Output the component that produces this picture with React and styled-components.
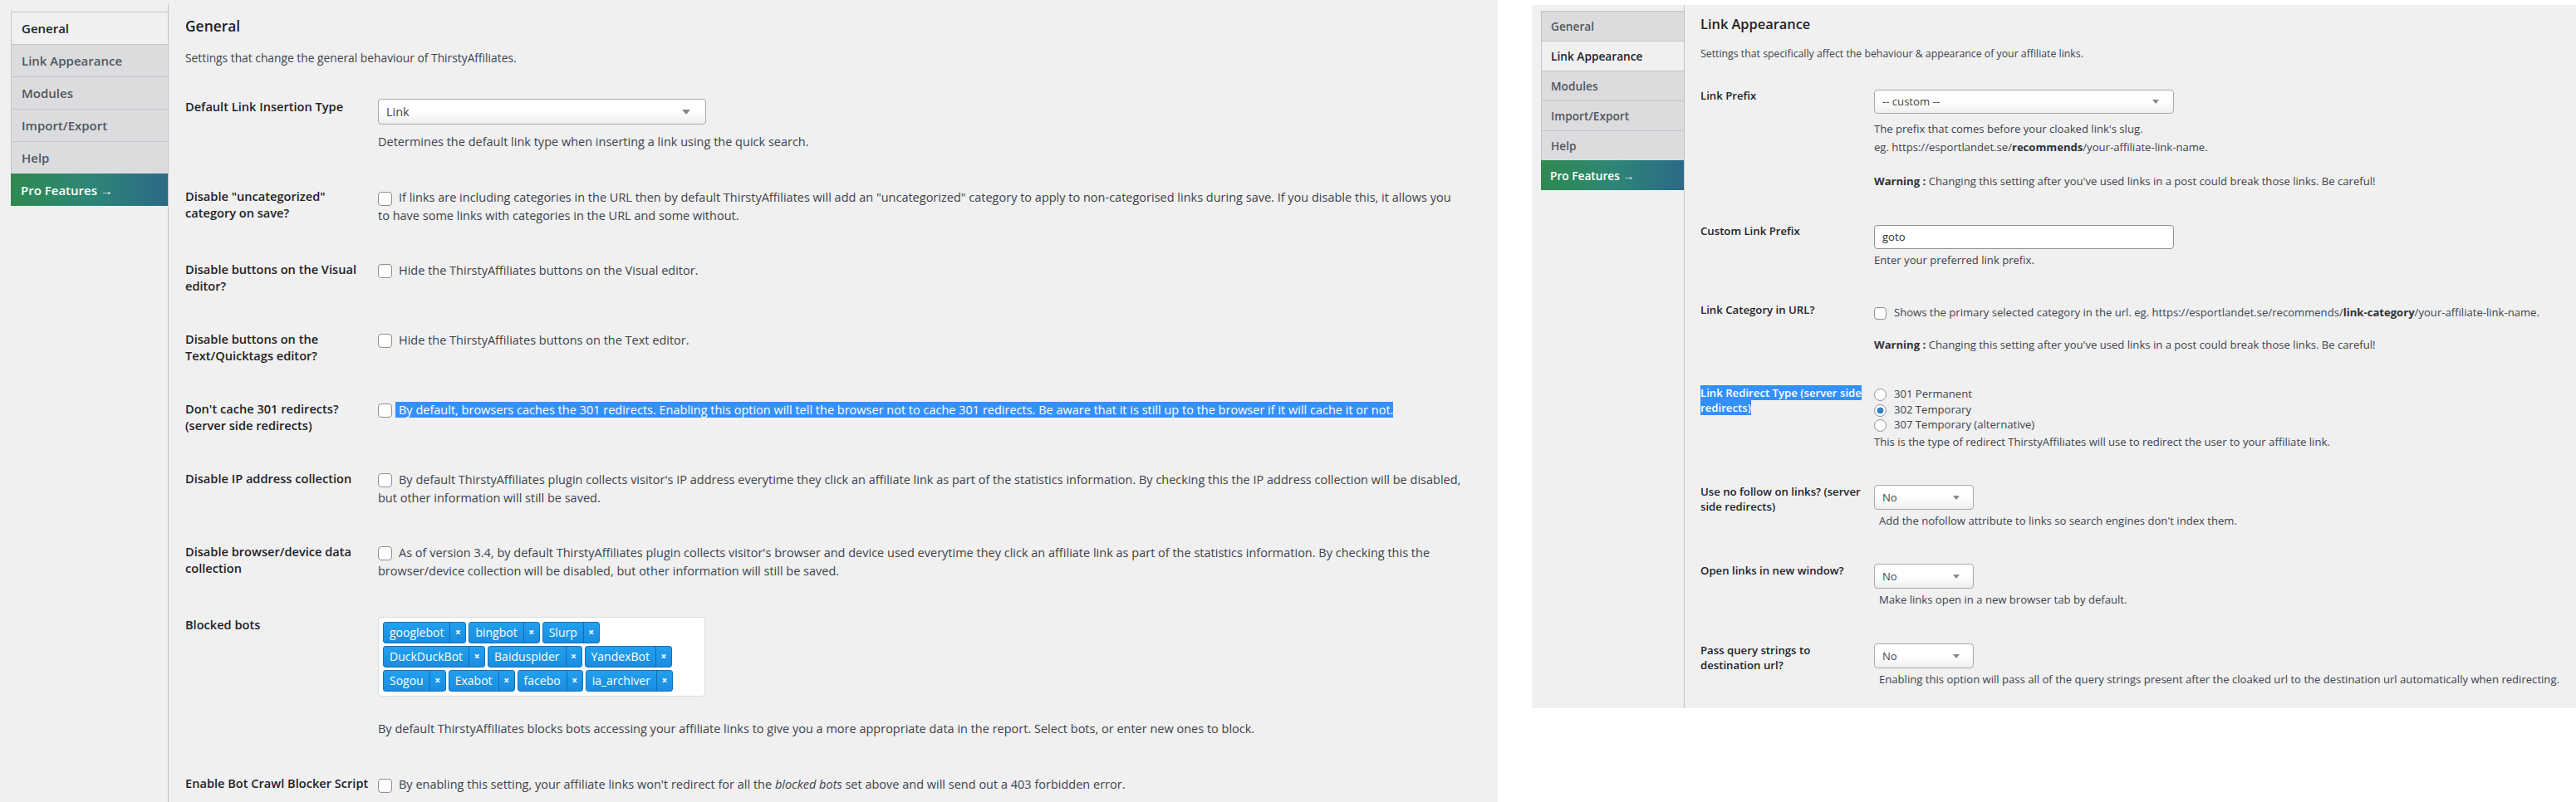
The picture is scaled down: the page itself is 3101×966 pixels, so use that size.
import React from 'react'
import styled, { createGlobalStyle, ThemeProvider } from 'styled-components'

// two screenshots of the same settings page, taken at different zoom levels
const large = {
  panelW: 1803, panelH: 966, panelTop: 0, panelLeft: 0,
  sideMt: 4, sidePt: 10, sideMl: 13, sideW: 189,
  tabH: 39, tabFs: 15, tabPl: 12,
  contentPt: 19, contentPl: 20,
  h2Fs: 17.4, h2Lh: 24, introMt: 16, introFs: 13.8, introLh: 22,
  labelW: 232, labelFs: 14.6, labelLh: 20,
  fieldFs: 14.5, fieldLh: 22, fieldPt: 1,
  check: 17, checkGap: 8,
}

const small = {
  panelW: 1257, panelH: 847, panelTop: 6, panelLeft: 41,
  sideMt: 0, sidePt: 7, sideMl: 11, sideW: 172,
  tabH: 36, tabFs: 13.7, tabPl: 11,
  contentPt: 12, contentPl: 19,
  h2Fs: 16.4, h2Lh: 22, introMt: 14, introFs: 12.3, introLh: 21,
  labelW: 209, labelFs: 13.2, labelLh: 18,
  fieldFs: 13.1, fieldLh: 21, fieldPt: 1.5,
  check: 15, checkGap: 9,
}

const GlobalStyle = createGlobalStyle`
  html, body {
    margin: 0;
    padding: 0;
    background: #fff;
  }
  body {
    font-family: "Open Sans", "Noto Sans", "Liberation Sans", sans-serif;
  }
  * { box-sizing: border-box; }
`

const Screen = styled.div`
  display: flex;
  align-items: flex-start;
  width: 3101px;
  height: 966px;
  overflow: hidden;
`

const Panel = styled.div`
  display: flex;
  flex: none;
  width: ${({ theme }) => theme.panelW}px;
  height: ${({ theme }) => theme.panelH}px;
  margin-top: ${({ theme }) => theme.panelTop}px;
  margin-left: ${({ theme }) => theme.panelLeft}px;
  background: #f0f0f1;
  overflow: hidden;
`

const Sidebar = styled.nav`
  flex: none;
  width: ${({ theme }) => theme.sideW + theme.sideMl + 1}px;
  margin-top: ${({ theme }) => theme.sideMt}px;
  padding: ${({ theme }) => theme.sidePt}px 0 0 ${({ theme }) => theme.sideMl}px;
  border-right: 1px solid #c3c4c7;
`

const Tab = styled.div`
  display: flex;
  align-items: center;
  height: ${({ theme }) => theme.tabH}px;
  padding-left: ${({ theme }) => theme.tabPl}px;
  border-top: 1px solid #c3c4c7;
  border-left: 1px solid #c3c4c7;
  background: ${({ $active }) => ($active ? '#f0f0f1' : '#dcdcde')};
  color: ${({ $active }) => ($active ? '#1d2327' : '#50575e')};
  font-size: ${({ theme }) => theme.tabFs}px;
  font-weight: 600;
  white-space: nowrap;
`

const ProTab = styled(Tab)`
  border: none;
  background: linear-gradient(to right, #2f8a4f 0%, #2d8676 50%, #2c6a87 100%);
  color: #fff;
`

const Content = styled.main`
  flex: 1;
  min-width: 0;
  padding: ${({ theme }) => theme.contentPt}px 0 0 ${({ theme }) => theme.contentPl}px;
`

const Title = styled.h2`
  margin: 0;
  font-size: ${({ theme }) => theme.h2Fs}px;
  line-height: ${({ theme }) => theme.h2Lh}px;
  font-weight: 600;
  color: #1d2327;
`

const Intro = styled.p`
  margin: ${({ theme }) => theme.introMt}px 0 0;
  font-size: ${({ theme }) => theme.introFs}px;
  line-height: ${({ theme }) => theme.introLh}px;
  color: #3c434a;
  white-space: nowrap;
`

const Row = styled.div`
  display: grid;
  grid-template-columns: ${({ theme }) => theme.labelW}px 1fr;
  align-items: start;
  padding-top: ${({ $pad }) => $pad}px;
`

const Label = styled.div`
  font-size: ${({ theme }) => theme.labelFs}px;
  line-height: ${({ theme }) => theme.labelLh}px;
  font-weight: 600;
  color: #1d2327;
  white-space: nowrap;
`

const Field = styled.div`
  padding-top: ${({ theme }) => theme.fieldPt}px;
  font-size: ${({ theme }) => theme.fieldFs}px;
  line-height: ${({ theme }) => theme.fieldLh}px;
  color: #3c434a;
  white-space: nowrap;
`

const Hint = styled.div`
  margin-top: ${({ $mt }) => $mt || 0}px;
  padding-left: ${({ $indent }) => $indent || 0}px;
  line-height: ${({ $lh, theme }) => $lh || theme.fieldLh}px;
`

const Strong = styled.b`
  font-weight: 700;
  color: #2c3338;
`

const Selected = styled.span`
  background: #3390ff;
  color: #fff;
  padding-left: ${({ $lead }) => $lead || 0}px;
`

const Check = styled.span`
  display: inline-block;
  width: ${({ theme }) => theme.check}px;
  height: ${({ theme }) => theme.check}px;
  margin-right: ${({ $gap, theme }) => $gap ?? theme.checkGap}px;
  border: 1px solid #8c8f94;
  border-radius: 4px;
  background: #fff;
  vertical-align: middle;
`

const Radio = styled.span`
  display: inline-block;
  width: 15px;
  height: 15px;
  margin-right: 9px;
  border: 1px solid #8c8f94;
  border-radius: 50%;
  background: ${({ $on }) =>
    $on ? 'radial-gradient(circle, #3582c4 0 3.6px, #fff 4.2px)' : '#fff'};
  vertical-align: middle;
`

const RadioLine = styled.div`
  line-height: 18.5px;
`

const SelectBox = styled.div`
  display: flex;
  align-items: center;
  justify-content: space-between;
  width: ${({ $w }) => $w}px;
  height: ${({ $h }) => $h}px;
  padding: 0 ${({ $pr }) => $pr}px 0 9px;
  border: 1px solid #aaa;
  border-radius: 4px;
  background: linear-gradient(to bottom, #ffffff 50%, #eeeeee 100%);
  color: #444;
  font-size: ${({ $fs }) => $fs}px;
`

const Caret = styled.span`
  width: 0;
  height: 0;
  border-left: ${({ $s }) => $s}px solid transparent;
  border-right: ${({ $s }) => $s}px solid transparent;
  border-top: ${({ $s }) => $s + 1}px solid #888;
`

const TextInput = styled.div`
  display: flex;
  align-items: center;
  width: 361px;
  height: 29px;
  padding-left: 9px;
  border: 1px solid #8c8f94;
  border-radius: 4px;
  background: #fff;
  color: #2c3338;
`

const TagBox = styled.div`
  display: flex;
  flex-direction: column;
  gap: 3px;
  width: 394px;
  padding: 5px;
  border: 1px solid #dcdcde;
  border-radius: 4px;
  background: #fff;
`

const TagRow = styled.div`
  display: flex;
  gap: 3px;
`

const Tag = styled.div`
  display: flex;
  height: 26px;
  border: 1px solid #0f72c1;
  border-radius: 3px;
  background: linear-gradient(to bottom, #22a0ef, #1a8ce0);
  color: #fff;
  font-size: 14px;
  line-height: 24px;
`

const TagText = styled.span`
  padding: 0 7px;
  border-right: 1px solid #0f6cb5;
`

const TagX = styled.span`
  display: flex;
  align-items: center;
  justify-content: center;
  width: 18px;
  font-size: 12px;
  font-weight: 700;
`

const Select = ({ w, h, fs, pr, caret, children }) => (
  <SelectBox $w={w} $h={h} $fs={fs} $pr={pr}>
    <span>{children}</span>
    <Caret $s={caret} />
  </SelectBox>
)

const Tabs = ({ active }) => (
  <Sidebar>
    {['General', 'Link Appearance', 'Modules', 'Import/Export', 'Help'].map((name) => (
      <Tab key={name} $active={name === active}>{name}</Tab>
    ))}
    <ProTab>Pro Features →</ProTab>
  </Sidebar>
)

const bots = [
  ['googlebot', 'bingbot', 'Slurp'],
  ['DuckDuckBot', 'Baiduspider', 'YandexBot'],
  ['Sogou', 'Exabot', 'facebo', 'ia_archiver'],
]

const GeneralPanel = () => (
  <ThemeProvider theme={large}>
    <Panel>
      <Tabs active="General" />
      <Content>
        <Title>General</Title>
        <Intro>Settings that change the general behaviour of ThirstyAffiliates.</Intro>

        <Row $pad={37}>
          <Label>Default Link Insertion Type</Label>
          <Field>
            <Select w={395} h={31} fs={14.5} pr={18} caret={5}>Link</Select>
            <Hint $mt={9.5}>Determines the default link type when inserting a link using the quick search.</Hint>
          </Field>
        </Row>

        <Row $pad={44.5}>
          <Label>Disable "uncategorized"<br />category on save?</Label>
          <Field>
            <Check />If links are including categories in the URL then by default ThirstyAffiliates will add an "uncategorized" category to apply to non-categorised links during save. If you disable this, it allows you
            <br />to have some links with categories in the URL and some without.
          </Field>
        </Row>

        <Row $pad={42.5}>
          <Label>Disable buttons on the Visual<br />editor?</Label>
          <Field><Check />Hide the ThirstyAffiliates buttons on the Visual editor.</Field>
        </Row>

        <Row $pad={44}>
          <Label>Disable buttons on the<br />Text/Quicktags editor?</Label>
          <Field><Check />Hide the ThirstyAffiliates buttons on the Text editor.</Field>
        </Row>

        <Row $pad={44}>
          <Label>Don't cache 301 redirects?<br />(server side redirects)</Label>
          <Field>
            <Check $gap={4} />
            <Selected $lead={4}>By default, browsers caches the 301 redirects. Enabling this option will tell the browser not to cache 301 redirects. Be aware that it is still up to the browser if it will cache it or not.</Selected>
          </Field>
        </Row>

        <Row $pad={44}>
          <Label>Disable IP address collection</Label>
          <Field>
            <Check />By default ThirstyAffiliates plugin collects visitor's IP address everytime they click an affiliate link as part of the statistics information. By checking this the IP address collection will be disabled,
            <br />but other information will still be saved.
          </Field>
        </Row>

        <Row $pad={43}>
          <Label>Disable browser/device data<br />collection</Label>
          <Field>
            <Check />As of version 3.4, by default ThirstyAffiliates plugin collects visitor's browser and device used everytime they click an affiliate link as part of the statistics information. By checking this the
            <br />browser/device collection will be disabled, but other information will still be saved.
          </Field>
        </Row>

        <Row $pad={43}>
          <Label>Blocked bots</Label>
          <Field>
            <TagBox>
              {bots.map((row, i) => (
                <TagRow key={i}>
                  {row.map((bot) => (
                    <Tag key={bot}>
                      <TagText>{bot}</TagText>
                      <TagX>×</TagX>
                    </Tag>
                  ))}
                </TagRow>
              ))}
            </TagBox>
            <Hint $mt={28.3}>By default ThirstyAffiliates blocks bots accessing your affiliate links to give you a more appropriate data in the report. Select bots, or enter new ones to block.</Hint>
          </Field>
        </Row>

        <Row $pad={44.7}>
          <Label>Enable Bot Crawl Blocker Script</Label>
          <Field>
            <Check />By enabling this setting, your affiliate links won't redirect for all the <i>blocked bots</i> set above and will send out a 403 forbidden error.
          </Field>
        </Row>
      </Content>
    </Panel>
  </ThemeProvider>
)

const Warning = ({ mt }) => (
  <Hint $mt={mt}>
    <Strong>Warning :</Strong> Changing this setting after you've used links in a post could break those links. Be careful!
  </Hint>
)

const LinkAppearancePanel = () => (
  <ThemeProvider theme={small}>
    <Panel>
      <Tabs active="Link Appearance" />
      <Content>
        <Title>Link Appearance</Title>
        <Intro>Settings that specifically affect the behaviour &amp; appearance of your affiliate links.</Intro>

        <Row $pad={31.4}>
          <Label>Link Prefix</Label>
          <Field>
            <Select w={361} h={29} fs={13.1} pr={17} caret={4.5}>-- custom --</Select>
            <Hint $mt={7.5} $lh={22}>
              The prefix that comes before your cloaked link's slug.
              <br />eg. https://esportlandet.se/<Strong>recommends</Strong>/your-affiliate-link-name.
            </Hint>
            <Warning mt={20} />
          </Field>
        </Row>

        <Row $pad={40}>
          <Label>Custom Link Prefix</Label>
          <Field>
            <TextInput>goto</TextInput>
            <Hint $mt={3.5}>Enter your preferred link prefix.</Hint>
          </Field>
        </Row>

        <Row $pad={40}>
          <Label>Link Category in URL?</Label>
          <Field>
            <Check />Shows the primary selected category in the url. eg. https://esportlandet.se/recommends/<Strong>link-category</Strong>/your-affiliate-link-name.
            <Warning mt={18} />
          </Field>
        </Row>

        <Row $pad={38}>
          <Label>
            <Selected>Link Redirect Type (server side <br />redirects)</Selected>
          </Label>
          <Field>
            <RadioLine><Radio />301 Permanent</RadioLine>
            <RadioLine><Radio $on />302 Temporary</RadioLine>
            <RadioLine><Radio />307 Temporary (alternative)</RadioLine>
            <Hint $mt={1}>This is the type of redirect ThirstyAffiliates will use to redirect the user to your affiliate link.</Hint>
          </Field>
        </Row>

        <Row $pad={40}>
          <Label>Use no follow on links? (server<br />side redirects)</Label>
          <Field>
            <Select w={120} h={30} fs={13.1} pr={16} caret={4.5}>No</Select>
            <Hint $mt={2.5} $indent={6}>Add the nofollow attribute to links so search engines don't index them.</Hint>
          </Field>
        </Row>

        <Row $pad={40}>
          <Label>Open links in new window?</Label>
          <Field>
            <Select w={120} h={30} fs={13.1} pr={16} caret={4.5}>No</Select>
            <Hint $mt={2.5} $indent={6}>Make links open in a new browser tab by default.</Hint>
          </Field>
        </Row>

        <Row $pad={41}>
          <Label>Pass query strings to<br />destination url?</Label>
          <Field>
            <Select w={120} h={30} fs={13.1} pr={16} caret={4.5}>No</Select>
            <Hint $mt={2.5} $indent={6}>Enabling this option will pass all of the query strings present after the cloaked url to the destination url automatically when redirecting.</Hint>
          </Field>
        </Row>
      </Content>
    </Panel>
  </ThemeProvider>
)

export default function App() {
  return (
    <>
      <GlobalStyle />
      <Screen>
        <GeneralPanel />
        <LinkAppearancePanel />
      </Screen>
    </>
  )
}
